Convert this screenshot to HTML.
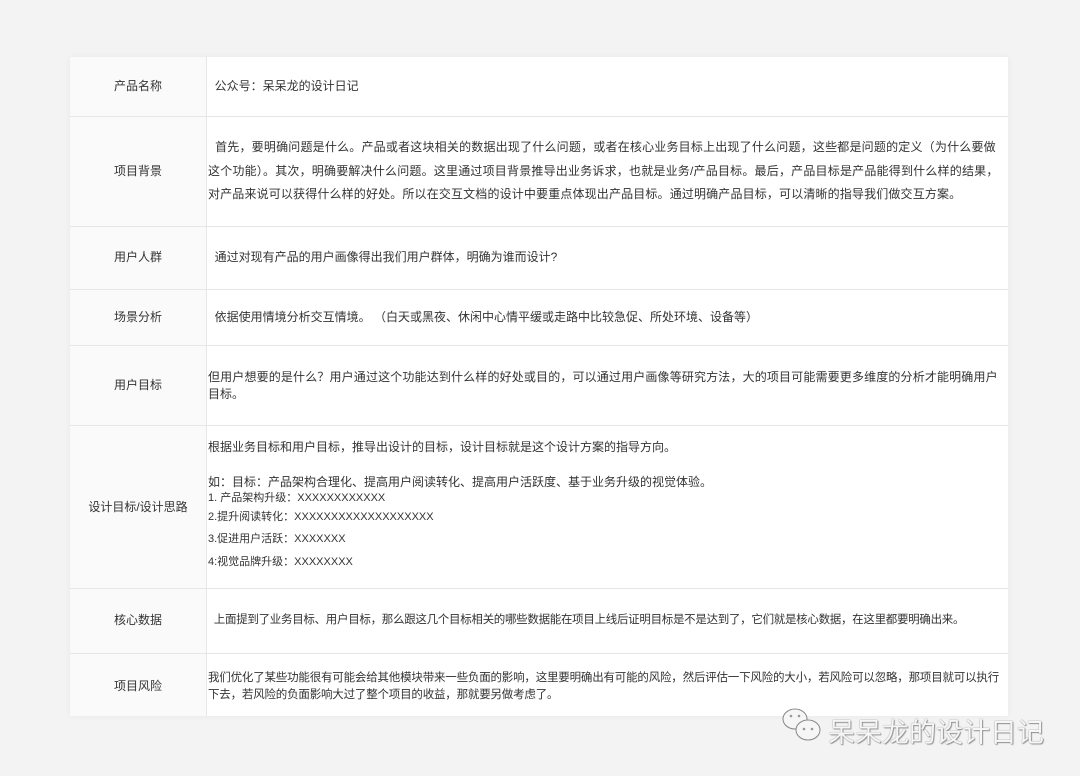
<!DOCTYPE html><html><head><meta charset="utf-8"><style>
body{margin:0;width:1080px;height:776px;background:#f3f3f3;font-family:"Liberation Sans","Noto Sans CJK SC",sans-serif;color:#333;font-size:12px;position:relative;overflow:hidden}
.t{position:absolute;left:70px;top:57px;width:938px;height:659px;background:#fff;box-shadow:0 0 6px rgba(0,0,0,.05)}
.lc{position:absolute;left:70px;top:57px;width:136px;height:659px;background:#fafafa;border-right:1px solid #e6e6e6}
.h{position:absolute;left:70px;width:938px;height:1px;background:#e6e6e6}
.l{position:absolute;left:70px;width:136px;text-align:center;line-height:16px;margin-top:-8px;white-space:nowrap}
.c{position:absolute;left:208px;line-height:16px;margin-top:-8px;white-space:nowrap}
.wm{position:absolute;left:828px;top:711px;font-size:27px;color:#f6f6f6;text-shadow:0 0 1px #666,1px 1px 1px #999}
</style></head><body>
<div class="t"></div><div class="lc"></div>
<div class="h" style="top:116px"></div><div class="h" style="top:226px"></div><div class="h" style="top:289px"></div><div class="h" style="top:345px"></div><div class="h" style="top:425px"></div><div class="h" style="top:588px"></div><div class="h" style="top:653px"></div>
<div class="l" style="top:86px">产品名称</div>
<div class="l" style="top:171px">项目背景</div>
<div class="l" style="top:257px">用户人群</div>
<div class="l" style="top:317px">场景分析</div>
<div class="l" style="top:385px">用户目标</div>
<div class="l" style="top:507px">设计目标/设计思路</div>
<div class="l" style="top:620px">核心数据</div>
<div class="l" style="top:686px">项目风险</div>
<div class="c" style="top:86px">&nbsp;&nbsp;公众号：呆呆龙的设计日记</div>
<div class="c" style="top:147px;letter-spacing:0.2px">&nbsp;&nbsp;首先，要明确问题是什么。产品或者这块相关的数据出现了什么问题，或者在核心业务目标上出现了什么问题，这些都是问题的定义（为什么要做</div>
<div class="c" style="top:171px;letter-spacing:0.2px">这个功能）。其次，明确要解决什么问题。这里通过项目背景推导出业务诉求，也就是业务/产品目标。最后，产品目标是产品能得到什么样的结果，</div>
<div class="c" style="top:194px;letter-spacing:0.15px">对产品来说可以获得什么样的好处。所以在交互文档的设计中要重点体现出产品目标。通过明确产品目标，可以清晰的指导我们做交互方案。</div>
<div class="c" style="top:257px">&nbsp;&nbsp;通过对现有产品的用户画像得出我们用户群体，明确为谁而设计?</div>
<div class="c" style="top:317px">&nbsp;&nbsp;依据使用情境分析交互情境。 （白天或黑夜、休闲中心情平缓或走路中比较急促、所处环境、设备等）</div>
<div class="c" style="top:377px;letter-spacing:0.15px">但用户想要的是什么？用户通过这个功能达到什么样的好处或目的，可以通过用户画像等研究方法，大的项目可能需要更多维度的分析才能明确用户</div>
<div class="c" style="top:394px">目标。</div>
<div class="c" style="top:447px">根据业务目标和用户目标，推导出设计的目标，设计目标就是这个设计方案的指导方向。</div>
<div class="c" style="top:482px">如：目标：产品架构合理化、提高用户阅读转化、提高用户活跃度、基于业务升级的视觉体验。</div>
<div class="c" style="top:498px;font-size:11px">1. 产品架构升级：XXXXXXXXXXXX</div>
<div class="c" style="top:517px;font-size:11px">2.提升阅读转化：XXXXXXXXXXXXXXXXXXX</div>
<div class="c" style="top:539px;font-size:11px">3.促进用户活跃：XXXXXXX</div>
<div class="c" style="top:562px;font-size:11px">4:视觉品牌升级：XXXXXXXX</div>
<div class="c" style="top:620px;font-size:11.5px;letter-spacing:-0.3px">&nbsp;&nbsp;上面提到了业务目标、用户目标，那么跟这几个目标相关的哪些数据能在项目上线后证明目标是不是达到了，它们就是核心数据，在这里都要明确出来。</div>
<div class="c" style="top:678px;font-size:11.5px;letter-spacing:-0.2px">我们优化了某些功能很有可能会给其他模块带来一些负面的影响，这里要明确出有可能的风险，然后评估一下风险的大小，若风险可以忽略，那项目就可以执行</div>
<div class="c" style="top:695px;font-size:11.5px;letter-spacing:-0.2px">下去，若风险的负面影响大过了整个项目的收益，那就要另做考虑了。</div>
<svg style="position:absolute;left:781px;top:706px" width="44" height="40" viewBox="0 0 44 40"><g fill="#f6f6f6" stroke="#888" stroke-width="1"><ellipse cx="14" cy="13" rx="12" ry="10"/><ellipse cx="27" cy="24" rx="12" ry="10"/></g><g fill="#999"><circle cx="10" cy="10" r="1.3"/><circle cx="18" cy="10" r="1.3"/><circle cx="23" cy="23" r="1.3"/><circle cx="31" cy="23" r="1.3"/></g></svg>
<div class="wm">呆呆龙的设计日记</div>
</body></html>
